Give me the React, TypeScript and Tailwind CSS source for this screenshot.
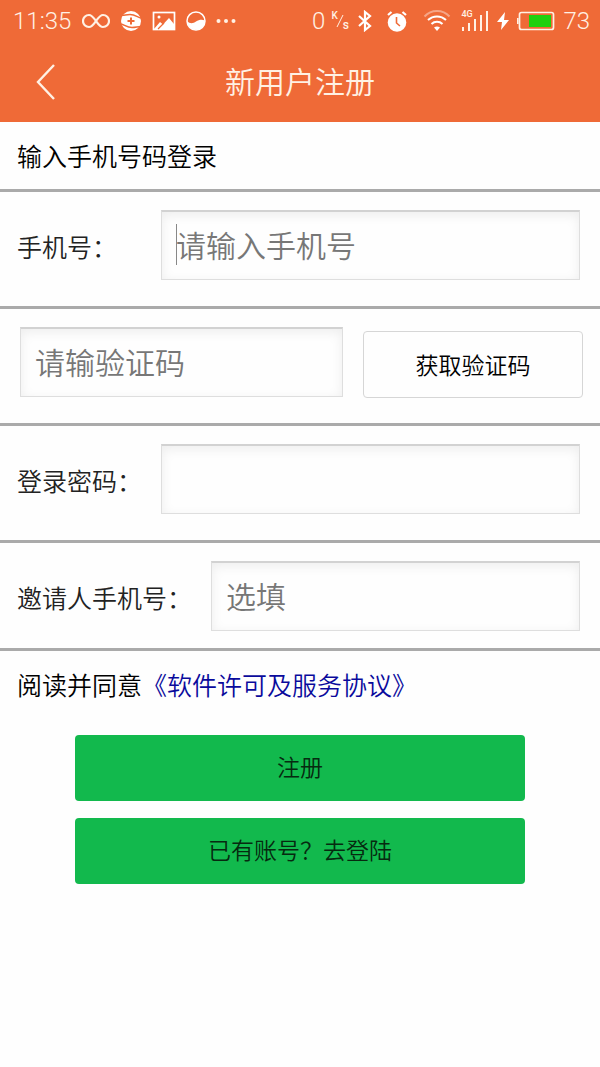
import { useState, type InputHTMLAttributes, type ReactNode } from "react";
import clsx from "clsx";

/* ---------------- Status bar ---------------- */
function StatusBar() {
  return (
    <div className="flex h-[42px] items-center justify-between pl-[13px] pr-2.5 font-[Roboto,sans-serif] text-2xl font-light text-[#fff1e4]">
      <div className="flex items-center gap-[10px]">
        <span className="w-[59px]">11:35</span>
        <svg width="28" height="16" viewBox="0 0 28 16" fill="none" stroke="currentColor" strokeWidth="2.200">
          <path d="M14 8C11.500 4.500 10 2 7 2a6 6 0 0 0 0 12c3 0 4.500-2.500 7-6s4-6 7-6a6 6 0 0 1 0 12c-3 0-4.500-2.500-7-6Z" />
        </svg>
        <svg width="22" height="22" viewBox="0 0 22 22" fill="none">
          <circle cx="11" cy="11" r="10" fill="#fff" />
          <path d="M0 5c4 1 5-.5 10-.5s8 3 11 3.500" stroke="#ef6a37" strokeWidth="1.600" />
          <path d="M22 17c-4-1-5 .5-10 .5S4 14.500 1 14" stroke="#ef6a37" strokeWidth="1.600" />
          <path d="M11 7.500v7M7.500 11h7" stroke="#ef6a37" strokeWidth="2" />
        </svg>
        <svg width="24" height="20" viewBox="0 0 24 20" fill="none">
          <rect x="1.500" y="1.500" width="21" height="17" stroke="#fff" strokeWidth="1.700" />
          <path d="m2 18 6-7 3 2.500L17 7l5 6v5Z" fill="#fff" />
          <path d="m6 18 6-6" stroke="#ef6a37" strokeWidth="1.200" />
          <circle cx="7" cy="6" r="1.500" fill="#fff" />
        </svg>
        <svg width="20" height="20" viewBox="0 0 20 20" fill="none">
          <circle cx="10" cy="10" r="9" stroke="#fff" strokeWidth="1.500" />
          <path d="M1 10c3 3 6 2.500 9 .5s6-2.500 9-1a9 9 0 0 1-18 .5Z" fill="#fff" />
        </svg>
        <svg width="20" height="6" viewBox="0 0 20 6" fill="currentColor">
          <circle cx="2.500" cy="3" r="2" />
          <circle cx="10" cy="3" r="2" />
          <circle cx="17.500" cy="3" r="2" />
        </svg>
      </div>

      <div className="flex items-center gap-2">
        <span>0</span>
        <span className="-ml-0.5 flex h-5 w-[18px] text-xs leading-3 font-medium">
          <span className="-mr-px self-start text-[10px] leading-[10px]">K</span>
          <svg className="-mx-px shrink-0" width="8" height="20" viewBox="0 0 8 20" stroke="currentColor">
            <path d="M7 4 1 16" />
          </svg>
          <span className="self-end">s</span>
        </span>
        <svg width="16" height="22" viewBox="0 0 16 22" fill="none" stroke="#fff" strokeWidth="2.200">
          <path d="m2 6 11 10-5 4V2l5 4L2 16" />
        </svg>
        <svg className="mr-2 ml-1.5" width="20" height="22" viewBox="0 0 20 22" fill="none">
          <circle cx="10" cy="12.500" r="9.300" fill="#fff" />
          <path d="M1 5 4.500 2M19 5l-3.500-3" stroke="#fff" strokeWidth="2.200" />
          <path d="M9.500 7v6l3.500 3" stroke="#ef6a37" strokeWidth="1.600" />
        </svg>
        <svg width="28" height="22" viewBox="0 0 28 22" fill="none" stroke="#fff" strokeWidth="2">
          <path d="M1.500 6.500a17 17 0 0 1 25 0" opacity=".4" />
          <path d="M5 10a13 13 0 0 1 18 0M8.500 14a8 8 0 0 1 11 0" />
          <path d="m11 17.500 3 3.500 3-3.500c-2-1.300-4-1.300-6 0Z" fill="#fff" stroke="none" />
        </svg>
        <span className="relative ml-0.5">
          <svg width="28" height="22" viewBox="0 0 28 22" fill="none" stroke="currentColor" strokeWidth="2">
            <path d="M2 21v-4M8 21v-8M14 21V9M20 21V5M26 21V1" />
          </svg>
          <span className="absolute top-0 left-0 text-[9px] leading-[9px] font-medium">4G</span>
        </span>
        <svg width="12" height="18" viewBox="0 0 12 18" fill="#fff">
          <path d="M8 0 0 10h5l-1 8 8-10H7Z" />
        </svg>
        <svg width="38" height="20" viewBox="0 0 38 20" fill="none">
          <rect x="2.500" y="1.500" width="34" height="17" rx="2" stroke="#fff1e4" strokeWidth="1.700" />
          <path d="M.8 7v6" stroke="#fff1e4" strokeWidth="1.600" />
          <rect x="12" y="4" width="22" height="12" fill="#1fd00f" />
        </svg>
        <span>73</span>
      </div>
    </div>
  );
}

/* ---------------- Form pieces ---------------- */
function TextField({ className, ...rest }: InputHTMLAttributes<HTMLInputElement>) {
  return (
    <input
      className={clsx(
        "h-[70px] w-full min-w-0 border border-t-2 border-[#dedede] border-t-[#d2d2d2] bg-[#fefefe] px-[14px] pb-1 text-3xl font-[350] text-[#333] shadow-[inset_0_3px_12px_rgba(0,0,0,0.07)] outline-none placeholder:text-[#777]",
        className
      )}
      {...rest}
    />
  );
}

function Row({ children, last = false }: { children: ReactNode; last?: boolean }) {
  return (
    <div className={clsx("flex border-b-3 border-[#aaa] pt-[18px] pr-5", last ? "pb-[17px]" : "pb-[26px]")}>
      {children}
    </div>
  );
}

function Label({ id, wide = false, children }: { id: string; wide?: boolean; children: ReactNode }) {
  return (
    <label
      htmlFor={id}
      className={clsx(
        "flex shrink-0 items-center pt-1 pl-[17px] text-[25px] font-[350] whitespace-nowrap text-[#222]",
        wide ? "w-[211px]" : "w-[161px]"
      )}
    >
      {children}
    </label>
  );
}

const GREEN_BUTTON = "h-[66px] w-full rounded bg-[#12b94d] pb-1 text-[23px] font-[350] text-[#062a10]";

export default function App() {
  const [phone, setPhone] = useState("");
  const [code, setCode] = useState("");
  const [password, setPassword] = useState("");
  const [inviter, setInviter] = useState("");

  return (
    <div className="min-h-screen bg-[#fefefe] font-['Noto_Sans_CJK_SC',sans-serif] text-black">
      <header className="bg-[#ef6a37]">
        <StatusBar />
        <div className="grid h-20 grid-cols-[1fr_auto_1fr] items-center text-[#fff1e4]">
          <button type="button" aria-label="返回" className="w-fit pl-9">
            <svg width="20" height="36" viewBox="0 0 20 36" fill="none" stroke="currentColor" strokeWidth="2.400">
              <path d="M18 1 2 18l16 17" />
            </svg>
          </button>
          <h1 className="pb-1 text-3xl font-[350]">新用户注册</h1>
        </div>
      </header>

      <form onSubmit={(e) => e.preventDefault()}>
        <h2 className="flex h-[70px] items-center border-b-3 border-[#aaa] px-[17px] text-[25px] font-[350]">
          输入手机号码登录
        </h2>

        <Row>
          <Label id="phone">手机号：</Label>
          <div className="relative flex-1">
            <TextField id="phone" type="tel" placeholder="请输入手机号" value={phone} onChange={(e) => setPhone(e.target.value)} />
            {phone === "" && <span className="absolute top-[14px] left-[15px] h-[41px] w-px bg-[#888]" />}
          </div>
        </Row>

        <div className="flex gap-5 border-b-3 border-[#aaa] pt-[18px] pr-[17px] pb-[25px] pl-5">
          <TextField className="flex-1" aria-label="验证码" placeholder="请输验证码" value={code} onChange={(e) => setCode(e.target.value)} />
          <button type="button" className="mt-1 h-[67px] w-[220px] shrink-0 rounded border border-[#d6d6d6] text-[23px] font-[350]">
            获取验证码
          </button>
        </div>

        <Row>
          <Label id="password">登录密码：</Label>
          <TextField id="password" type="password" value={password} onChange={(e) => setPassword(e.target.value)} />
        </Row>

        <Row last>
          <Label id="inviter" wide>邀请人手机号：</Label>
          <TextField id="inviter" type="tel" placeholder="选填" value={inviter} onChange={(e) => setInviter(e.target.value)} />
        </Row>

        <p className="px-[17px] pt-[15px] text-[25px] leading-9 font-[350]">
          阅读并同意<a href="#agreement" className="text-[#0a0a9c]">《软件许可及服务协议》</a>
        </p>

        <div className="flex flex-col gap-[17px] px-[75px] pt-[33px]">
          <button type="submit" className={GREEN_BUTTON}>注册</button>
          <button type="button" className={GREEN_BUTTON}>已有账号？去登陆</button>
        </div>
      </form>
    </div>
  );
}
